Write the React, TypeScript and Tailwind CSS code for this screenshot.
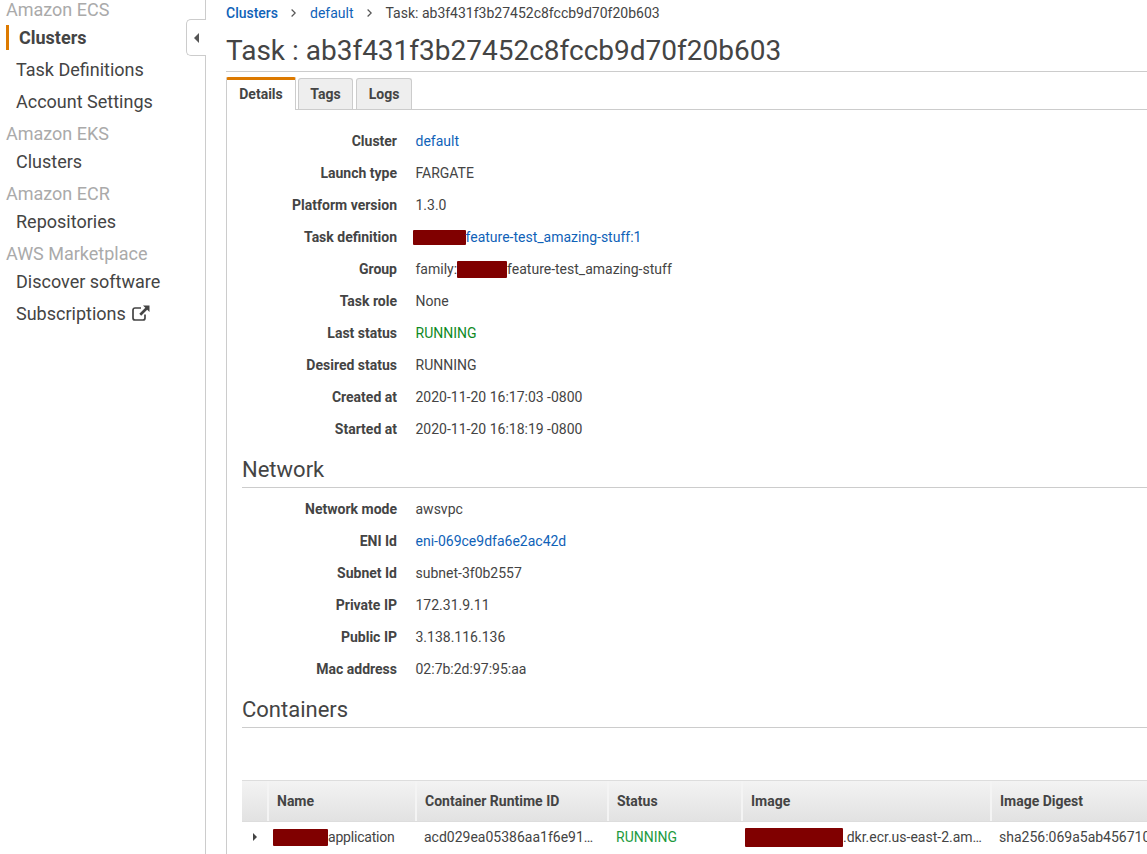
const font = "font-['Roboto',sans-serif]";

const Redact = ({ className }: { className: string }) => (
  <span className={`inline-block rounded-[1px] bg-[#800000] align-middle ${className}`} />
);

const Row = ({ label, children }: { label: string; children: React.ReactNode }) => (
  <div className="flex h-8 items-center">
    <div className="w-[155px] text-right text-[14px] font-bold text-[#444]">{label}</div>
    <div className="ml-[18.5px] flex items-center whitespace-nowrap text-[14px] text-[#444]">{children}</div>
  </div>
);

const Link = ({ children }: { children: React.ReactNode }) => <a className="text-[#0f62b8]">{children}</a>;

const SideHead = ({ children }: { children: React.ReactNode }) => (
  <div className="flex h-[28px] items-center pl-[6px] pt-[4px] text-[18px] text-[#aaa]">{children}</div>
);

const SideItem = ({ children }: { children: React.ReactNode }) => (
  <div className="flex h-8 items-center pl-4 text-[18px] text-[#444]">{children}</div>
);

const SectionHead = ({ children }: { children: React.ReactNode }) => (
  <div className="mt-[9px] flex h-[34px] items-center border-b border-[#ccc] pb-[1px] text-[22px] leading-none text-[#444]">{children}</div>
);

const Crumb = () => (
  <svg viewBox="0 0 5 8" className="ml-[13px] mr-[14px] h-2 w-[5px]" fill="none">
    <path d="M0.6 0.5 4.2 4 0.6 7.5" stroke="#555" strokeWidth="1.2" />
  </svg>
);

const Th = ({ className, children }: { className: string; children?: React.ReactNode }) => (
  <div className={`flex h-full shrink-0 items-center border-r-2 border-[#f4f4f4] pl-[8px] text-[14px] font-bold text-[#444] ${className}`}>
    {children}
  </div>
);

const Td = ({ className, children }: { className: string; children?: React.ReactNode }) => (
  <div className={`flex h-full shrink-0 items-center overflow-hidden whitespace-nowrap text-[14px] text-[#444] ${className}`}>
    {children}
  </div>
);

// external link glyph, heavier than the lucide one
const ExtIcon = () => (
  <svg viewBox="0 0 18 16" className="ml-[6px] h-4 w-[18px]" fill="none">
    <path d="M9 3H3a2 2 0 0 0-2 2v8a2 2 0 0 0 2 2h8a2 2 0 0 0 2-2V9.5" stroke="#444" strokeWidth="1.7" />
    <path d="M11 0.5h6.5V7l-2.3-2.3-6 6-1.9-1.9 6-6z" fill="#444" />
  </svg>
);

export default function App() {
  return (
    <div className={`flex h-[854px] w-[1147px] overflow-hidden bg-white ${font}`}>
      {/* Sidebar */}
      <aside className="relative w-[206px] shrink-0 border-r border-[#ccc]">
        <div className="-mt-[7px]">
          <SideHead>Amazon ECS</SideHead>
          <div className="relative flex h-8 items-center pl-[19px] text-[18px] font-bold text-[#444]">
            <span className="absolute left-[6px] top-[4px] h-[25px] w-[3px] bg-[#dd7a00]" />
            Clusters
          </div>
          <SideItem>Task Definitions</SideItem>
          <SideItem>Account Settings</SideItem>
          <SideHead>Amazon EKS</SideHead>
          <SideItem>Clusters</SideItem>
          <SideHead>Amazon ECR</SideHead>
          <SideItem>Repositories</SideItem>
          <SideHead>AWS Marketplace</SideHead>
          <SideItem>Discover software</SideItem>
          <SideItem>
            Subscriptions
            <ExtIcon />
          </SideItem>
        </div>
        <div className="absolute right-[-1px] top-[19px] flex h-[37px] w-[20px] items-center justify-center rounded-l-[5px] border border-r-0 border-[#ccc] bg-white">
          <span className="h-0 w-0 border-y-[5px] border-r-[5px] border-y-transparent border-r-[#555]" />
        </div>
      </aside>

      {/* Main */}
      <main className="min-w-0 flex-1 pl-5">
        <div className="flex h-[26px] items-center whitespace-nowrap text-[14px] text-[#444]">
          <a className="font-medium text-[#0f62b8]">Clusters</a>
          <Crumb />
          <a className="text-[#0f62b8]">default</a>
          <Crumb />
          <span>Task: ab3f431f3b27452c8fccb9d70f20b603</span>
        </div>
        <h1 className="flex h-[46px] items-center whitespace-nowrap border-b border-[#ccc] pt-[5px] text-[28px] font-normal leading-none text-[#444]">
          Task : ab3f431f3b27452c8fccb9d70f20b603
        </h1>

        {/* Tabs */}
        <div className="mt-[5px] flex h-[33px] gap-[2px] border-b border-[#ccc] text-[14px] font-bold text-[#444]">
          <div className="z-10 flex h-[33px] w-[70px] items-center justify-center rounded-t-[2px] border-x border-t-[3px] border-x-[#ccc] border-t-[#dd7a00] bg-white pb-[2px]">
            Details
          </div>
          <div className="mr-[1px] mt-[1px] flex h-[31px] w-[55px] items-center justify-center rounded-t-[3px] border border-b-0 border-[#ccc] bg-[#eee]">
            Tags
          </div>
          <div className="mt-[1px] flex h-[31px] w-[56px] items-center justify-center rounded-t-[3px] border border-b-0 border-[#ccc] bg-[#eee]">
            Logs
          </div>
        </div>

        <div className="h-[800px] border-l border-[#ccc] pl-[15px]">
          <div className="pt-[15px]">
            <Row label="Cluster"><Link>default</Link></Row>
            <Row label="Launch type">FARGATE</Row>
            <Row label="Platform version">1.3.0</Row>
            <Row label="Task definition">
              <Redact className="-ml-[3px] h-[15px] w-[53px]" />
              <Link>feature-test_amazing-stuff:1</Link>
            </Row>
            <Row label="Group">
              family:
              <Redact className="h-[17px] w-[50px]" />
              feature-test_amazing-stuff
            </Row>
            <Row label="Task role">None</Row>
            <Row label="Last status"><span className="text-[#0f8a1f]">RUNNING</span></Row>
            <Row label="Desired status">RUNNING</Row>
            <Row label="Created at">2020-11-20 16:17:03 -0800</Row>
            <Row label="Started at">2020-11-20 16:18:19 -0800</Row>
          </div>

          <SectionHead>Network</SectionHead>
          <div className="pt-[5px]">
            <Row label="Network mode">awsvpc</Row>
            <Row label="ENI Id"><Link>eni-069ce9dfa6e2ac42d</Link></Row>
            <Row label="Subnet Id">subnet-3f0b2557</Row>
            <Row label="Private IP">172.31.9.11</Row>
            <Row label="Public IP">3.138.116.136</Row>
            <Row label="Mac address">02:7b:2d:97:95:aa</Row>
          </div>

          <SectionHead>Containers</SectionHead>

          {/* Containers table */}
          <div className="mt-[52px]">
            <div className="flex h-[42px] border-y border-[#ddd] bg-gradient-to-b from-[#f3f3f3] to-[#e2e2e2]">
              <Th className="w-[27px]" />
              <Th className="w-[148px]">Name</Th>
              <Th className="w-[192px]">Container Runtime ID</Th>
              <Th className="w-[134px]">Status</Th>
              <Th className="w-[249px]">Image</Th>
              <Th className="w-[200px] border-r-0">Image Digest</Th>
            </div>
            <div className="flex h-[30px]">
              <Td className="w-[27px] justify-center pr-[1px]">
                <span className="h-0 w-0 border-y-[4px] border-l-[4px] border-y-transparent border-l-[#444]" />
              </Td>
              <Td className="w-[148px] pl-[4px]">
                <Redact className="h-[17px] w-[55px]" />
                <span className="tracking-[-0.2px]">application</span>
              </Td>
              <Td className="w-[192px] pl-[7px]">acd029ea05386aa1f6e91…</Td>
              <Td className="w-[134px] pl-[7px]"><span className="text-[#1d9a3e]">RUNNING</span></Td>
              <Td className="w-[249px] pl-[2px]">
                <Redact className="h-[19px] w-[98px]" />
                .dkr.ecr.us-east-2.am…
              </Td>
              <Td className="w-[200px] pl-[7px]">sha256:069a5ab456710</Td>
            </div>
          </div>
        </div>
      </main>
    </div>
  );
}
